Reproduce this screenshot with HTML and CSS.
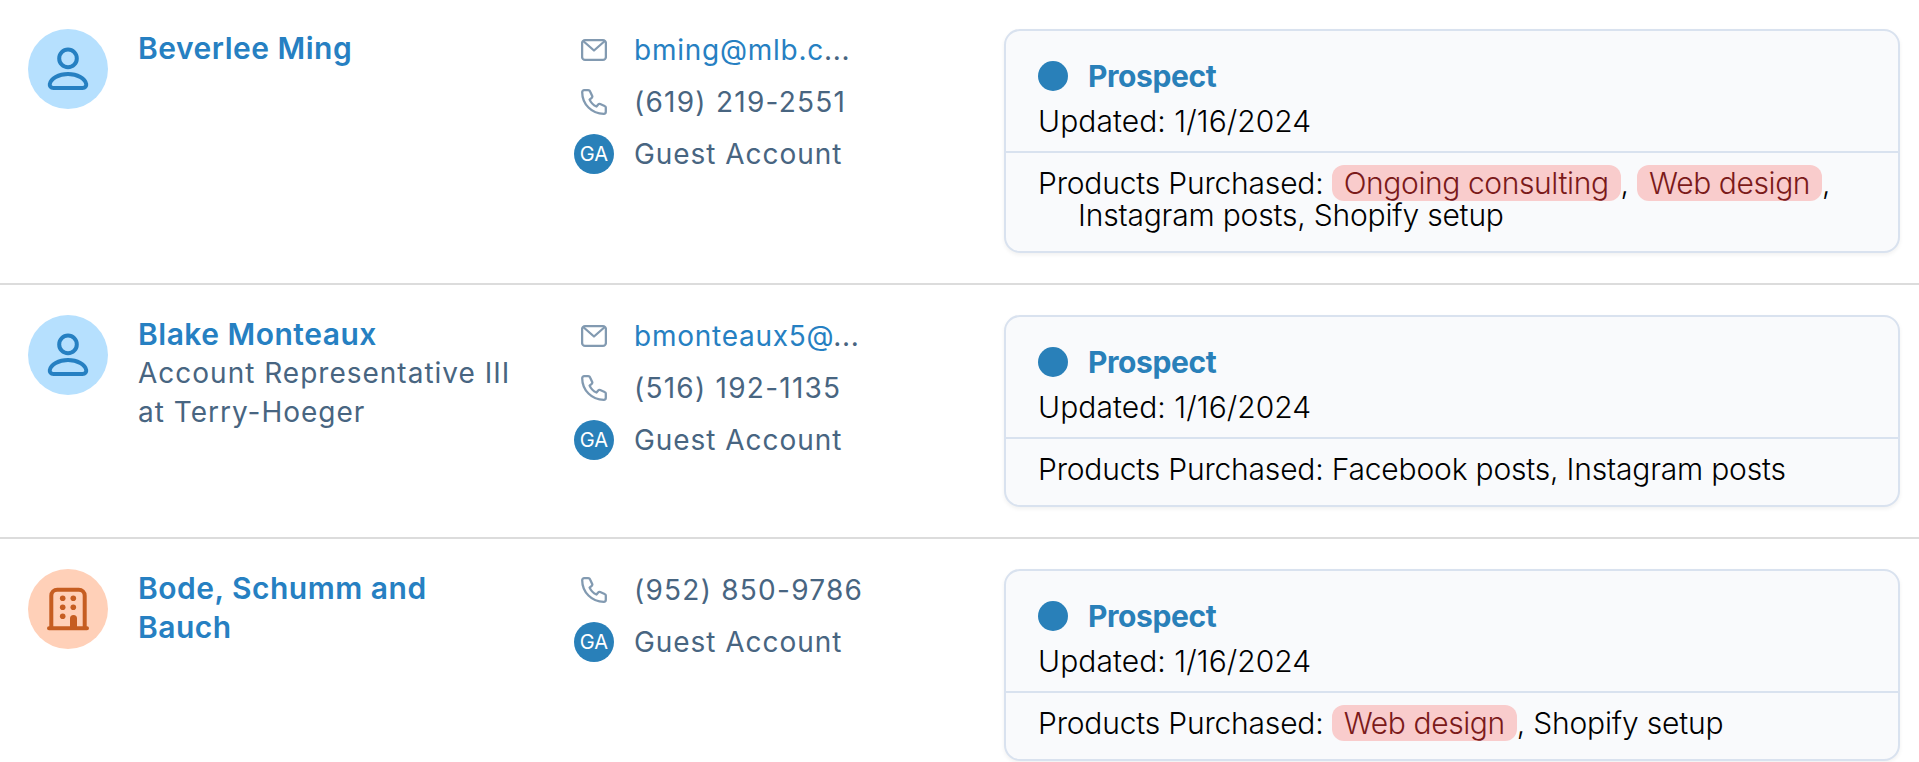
FILE: index.html
```html
<!DOCTYPE html>
<html lang="en">
<head>
    <meta charset="UTF-8">
    <meta name="viewport" content="width=device-width, initial-scale=1.0">
    <title>Contacts</title>
    <link rel="stylesheet" href="styles.css">
</head>
<body>
    <!-- shared icons -->
    <svg class="sprite" width="0" height="0">
        <symbol id="icon-person" viewBox="0 0 44 48">
            <circle cx="22" cy="13.4" r="8.8"/>
            <path d="M7.5 43h29c2.8 0 4-1.800 3.700-4C39.200 33.500 31.500 29 22 29S4.800 33.500 3.800 39c-.3 2.200.9 4 3.700 4z"/>
        </symbol>
        <symbol id="icon-building" viewBox="0 0 44 48">
            <path d="M5.300 43V10.700a6 6 0 0 1 6-6h21.400a6 6 0 0 1 6 6V43M3 43.300h38"/>
            <g class="solid">
                <circle cx="16.700" cy="13.300" r="2.800"/><circle cx="27.300" cy="13.300" r="2.800"/>
                <circle cx="16.700" cy="22.300" r="2.800"/><circle cx="27.300" cy="22.300" r="2.800"/>
                <circle cx="16.700" cy="31.300" r="2.800"/>
                <path d="M24 43v-9.500a3.500 3.500 0 0 1 7 0V43z"/>
            </g>
        </symbol>
        <symbol id="icon-mail" viewBox="0 0 26 26">
            <rect x="1.100" y="3.100" width="23.800" height="19.800" rx="3"/>
            <path d="M2.200 4l10.800 9.500 10.800-9.500"/>
        </symbol>
        <symbol id="icon-phone" viewBox="0 0 26 26">
            <path d="M3.200 1.200h4c.9 0 1.600.5 1.900 1.300l2.100 4.400c.3.700.1 1.400-.5 2L8.600 10.600c1.200 2.800 3.800 5.500 6.900 6.900l1.700-2c.5-.6 1.300-.8 2-.5l4.400 2c.8.300 1.300 1 1.200 1.800v4c0 1.200-.9 2-2 2C10.800 24.800 1.200 15.200 1.200 3.200c0-1.100.9-2 2-2z"/>
        </symbol>
    </svg>

    <div class="contact-row">
        <div class="avatar person"><svg><use href="#icon-person"/></svg></div>
        <div class="identity">
            <a class="name">Beverlee Ming</a>
        </div>
        <div class="details">
            <div class="detail email"><svg class="icon"><use href="#icon-mail"/></svg><span><a>bming@mlb.c</a>...</span></div>
            <div class="detail phone"><svg class="icon"><use href="#icon-phone"/></svg><span>(619) 219-2551</span></div>
            <div class="detail"><b class="initials">GA</b><span>Guest Account</span></div>
        </div>
        <div class="card">
            <div class="card-top">
                <div class="status"><i class="dot"></i>Prospect</div>
                <div class="updated">Updated: 1/16/2024</div>
            </div>
            <div class="products">Products Purchased: <mark>Ongoing consulting</mark>, <mark>Web design</mark>, Instagram posts, Shopify setup</div>
        </div>
    </div>

    <div class="contact-row">
        <div class="avatar person"><svg><use href="#icon-person"/></svg></div>
        <div class="identity">
            <a class="name">Blake Monteaux</a>
            <div class="job">Account Representative III at Terry-Hoeger</div>
        </div>
        <div class="details">
            <div class="detail email"><svg class="icon"><use href="#icon-mail"/></svg><span><a>bmonteaux5@</a>...</span></div>
            <div class="detail phone"><svg class="icon"><use href="#icon-phone"/></svg><span>(516) 192-1135</span></div>
            <div class="detail"><b class="initials">GA</b><span>Guest Account</span></div>
        </div>
        <div class="card">
            <div class="card-top">
                <div class="status"><i class="dot"></i>Prospect</div>
                <div class="updated">Updated: 1/16/2024</div>
            </div>
            <div class="products">Products Purchased: Facebook posts, Instagram posts</div>
        </div>
    </div>

    <div class="contact-row">
        <div class="avatar company"><svg><use href="#icon-building"/></svg></div>
        <div class="identity">
            <a class="name">Bode, Schumm and Bauch</a>
        </div>
        <div class="details">
            <div class="detail phone"><svg class="icon"><use href="#icon-phone"/></svg><span>(952) 850-9786</span></div>
            <div class="detail"><b class="initials">GA</b><span>Guest Account</span></div>
        </div>
        <div class="card">
            <div class="card-top">
                <div class="status"><i class="dot"></i>Prospect</div>
                <div class="updated">Updated: 1/16/2024</div>
            </div>
            <div class="products">Products Purchased: <mark>Web design</mark>, Shopify setup</div>
        </div>
    </div>
</body>
</html>
```
FILE: styles.css
```css
* {
    box-sizing: border-box;
}

body {
    margin: 0;
    height: 762px;
    overflow: hidden;
    font-family: Inter, sans-serif;
    background-color: #ffffff;
}

.sprite {
    display: none;
}

.contact-row {
    display: grid;
    grid-template-columns: 80px 376px 430px 896px;
    column-gap: 30px;
    align-items: start;
    padding: 30px 19px 30px 28px;
    border-bottom: 2px solid #dcdcdc;
}

.contact-row:first-of-type {
    padding-top: 29px;
}

.contact-row:last-of-type {
    border-bottom: none;
}

.avatar {
    display: flex;
    align-items: center;
    justify-content: center;
    width: 80px;
    height: 80px;
    border-radius: 50%;
}

.avatar svg {
    width: 44px;
    height: 48px;
    fill: none;
    stroke: currentColor;
    stroke-width: 4;
    stroke-linecap: round;
    stroke-linejoin: round;
}

.avatar.person {
    color: #2680c2;
    background-color: #b6e0fe;
}

.avatar.company {
    color: #c65d21;
    background-color: #ffd0b8;
}

.solid {
    fill: currentColor;
    stroke: none;
}

.name {
    display: block;
    color: #2680c2;
    font-size: 30px;
    font-weight: 600;
    line-height: 39px;
    letter-spacing: 0.5px;
}

.job {
    color: #486581;
    font-size: 28px;
    line-height: 39px;
    letter-spacing: 1px;
}

.details {
    display: flex;
    flex-direction: column;
    gap: 12px;
    padding: 1px 0 0 30px;
}

.detail {
    display: flex;
    align-items: center;
    gap: 20px;
    height: 40px;
    color: #486581;
    font-size: 28px;
    letter-spacing: 0.95px;
}

.email {
    letter-spacing: 0.75px;
}

.phone {
    letter-spacing: 1.25px;
}

.detail a {
    color: #2680c2;
}

.icon {
    width: 26px;
    height: 26px;
    margin: 0 7px;
    fill: none;
    stroke: #829ab1;
    stroke-width: 2.3;
    stroke-linejoin: round;
}

.initials {
    width: 40px;
    height: 40px;
    border-radius: 50%;
    color: #ffffff;
    background-color: #2980b9;
    font-size: 20px;
    font-weight: 400;
    line-height: 40px;
    letter-spacing: 0;
    text-align: center;
}

.card {
    border: 2px solid #d9e2ef;
    border-radius: 16px;
    background-color: #f9fafc;
    box-shadow: 0 2px 4px rgba(0, 0, 0, 0.06);
    color: #000000;
    font-size: 30px;
    font-weight: 300;
    line-height: 32px;
}

.card-top {
    padding: 29px 32px 14px;
    border-bottom: 2px solid #d9e2ef;
}

.status {
    display: flex;
    align-items: center;
    gap: 20px;
    color: #2980b9;
    font-weight: 700;
    letter-spacing: -0.4px;
}

.dot {
    width: 30px;
    height: 30px;
    border-radius: 50%;
    background-color: #2980b9;
}

.updated {
    margin-top: 13px;
    letter-spacing: 0.07px;
}

.products {
    padding: 14px 32px 20px 72px;
    text-indent: -40px;
    letter-spacing: -0.19px;
}

mark {
    padding: 0 12px;
    border-radius: 12px;
    color: #7b1a1a;
    background-color: #f9cccc;
    letter-spacing: -0.4px;
}
```
